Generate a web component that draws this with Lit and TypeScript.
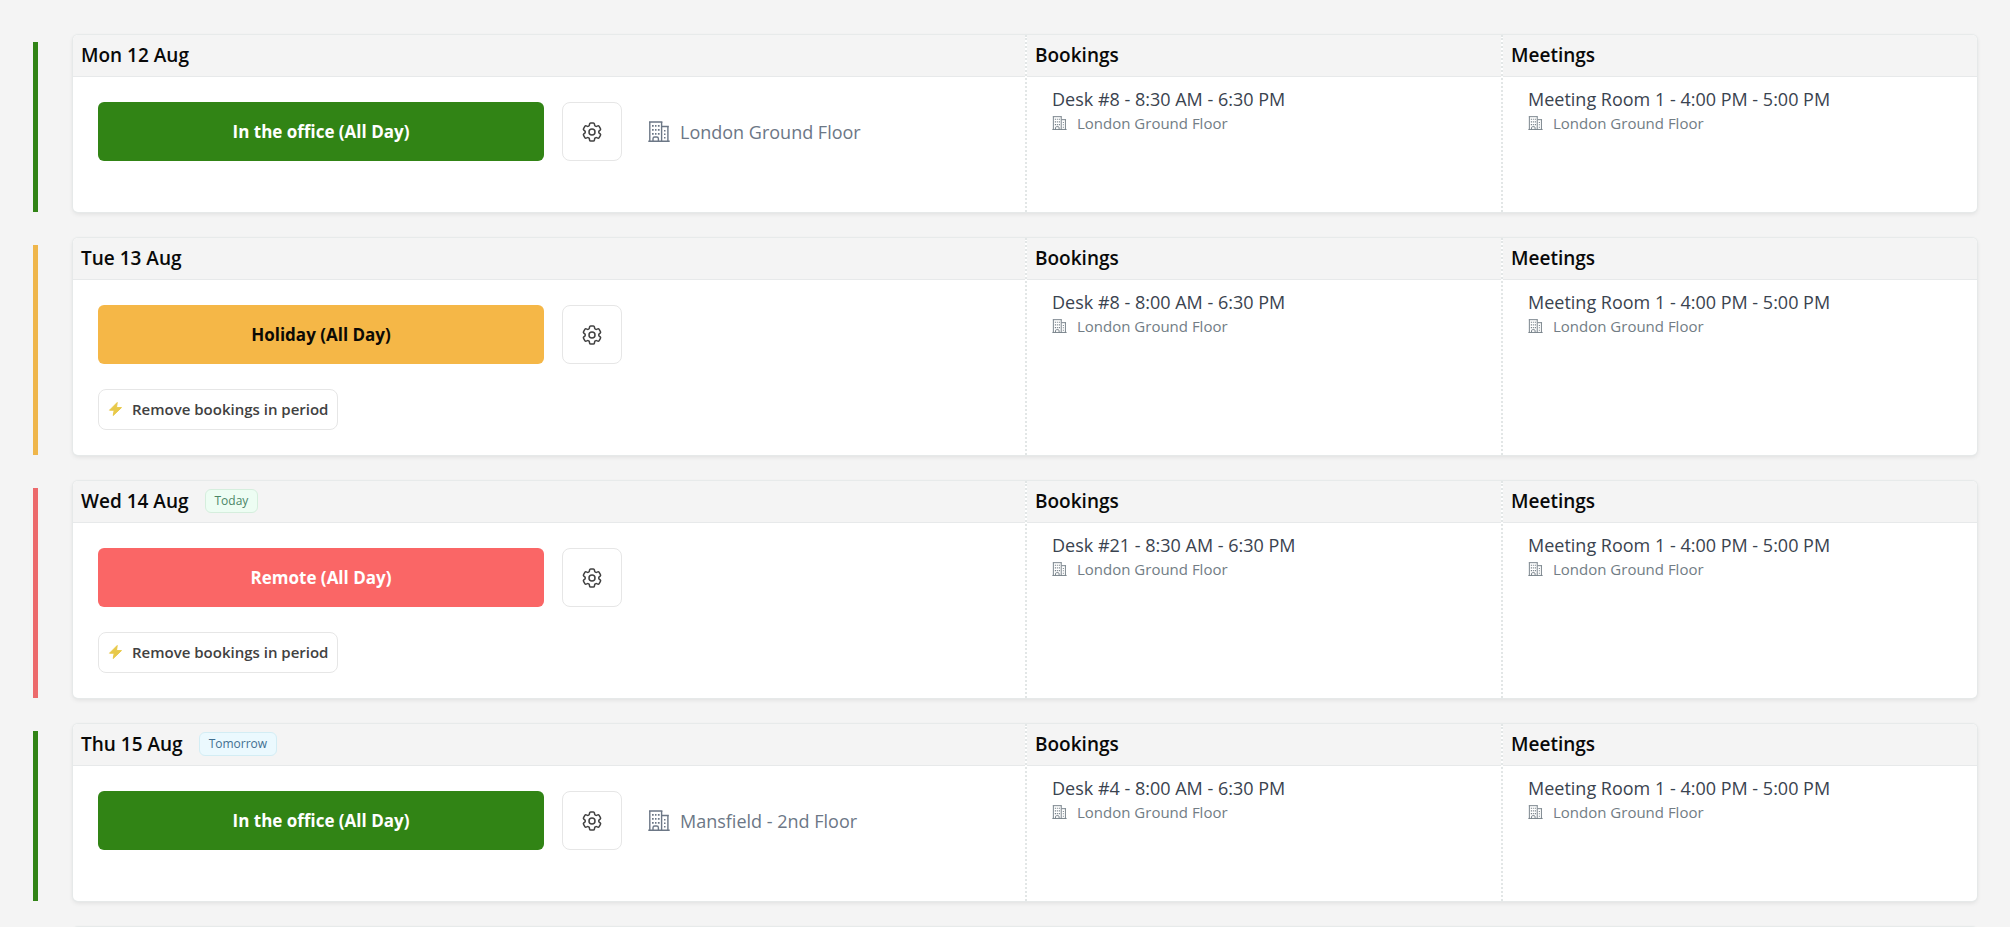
import { LitElement, html, css, svg, nothing } from "lit";
import { customElement, property } from "lit/decorators.js";

type Status = "office" | "holiday" | "remote";

interface Entry {
  title: string;
  place: string;
}

interface Day {
  date: string;
  status: Status;
  place?: string;
  badge?: "Today" | "Tomorrow";
  removable?: boolean;
  bookings: Entry[];
  meetings: Entry[];
}

const LABELS: Record<Status, string> = {
  office: "In the office (All Day)",
  holiday: "Holiday (All Day)",
  remote: "Remote (All Day)",
};

const LONDON = "London Ground Floor";
const meeting: Entry = { title: "Meeting Room 1 - 4:00 PM - 5:00 PM", place: LONDON };

const DAYS: Day[] = [
  {
    date: "Mon 12 Aug", status: "office", place: LONDON,
    bookings: [{ title: "Desk #8 - 8:30 AM - 6:30 PM", place: LONDON }], meetings: [meeting],
  },
  {
    date: "Tue 13 Aug", status: "holiday", removable: true,
    bookings: [{ title: "Desk #8 - 8:00 AM - 6:30 PM", place: LONDON }], meetings: [meeting],
  },
  {
    date: "Wed 14 Aug", status: "remote", removable: true, badge: "Today",
    bookings: [{ title: "Desk #21 - 8:30 AM - 6:30 PM", place: LONDON }], meetings: [meeting],
  },
  {
    date: "Thu 15 Aug", status: "office", place: "Mansfield - 2nd Floor", badge: "Tomorrow",
    bookings: [{ title: "Desk #4 - 8:00 AM - 6:30 PM", place: LONDON }], meetings: [meeting],
  },
];

const gearShape = svg`
  <path d="M9.594 3.94c.09-.542.56-.94 1.11-.94h2.593c.55 0 1.02.398 1.11.94l.213 1.281c.063.374.313.686.645.87.074.04.147.083.22.127.325.196.72.257 1.075.124l1.217-.456a1.125 1.125 0 0 1 1.37.49l1.296 2.247a1.125 1.125 0 0 1-.26 1.431l-1.003.827c-.293.241-.438.613-.43.992a7.723 7.723 0 0 1 0 .255c-.008.378.137.75.43.991l1.004.827c.424.35.534.955.26 1.43l-1.298 2.247a1.125 1.125 0 0 1-1.369.491l-1.217-.456c-.355-.133-.75-.072-1.076.124a6.47 6.47 0 0 1-.22.128c-.331.183-.581.495-.644.869l-.213 1.281c-.09.543-.56.94-1.11.94h-2.594c-.55 0-1.019-.398-1.11-.94l-.213-1.281c-.062-.374-.312-.686-.644-.87a6.52 6.52 0 0 1-.22-.127c-.325-.196-.72-.257-1.076-.124l-1.217.456a1.125 1.125 0 0 1-1.369-.49l-1.297-2.247a1.125 1.125 0 0 1 .26-1.431l1.004-.827c.292-.24.437-.613.43-.991a6.932 6.932 0 0 1 0-.255c.007-.38-.138-.751-.43-.992l-1.004-.827a1.125 1.125 0 0 1-.26-1.43l1.297-2.247a1.125 1.125 0 0 1 1.37-.491l1.216.456c.356.133.751.072 1.076-.124.072-.044.146-.086.22-.128.332-.183.582-.495.644-.869l.214-1.28Z"/>
  <circle cx="12" cy="12" r="3"/>`;

const buildingShape = svg`
  <g fill="none" stroke="currentColor" stroke-width="1.4">
    <path d="M.3 20.2H21.7M1 1h13.4M14 5.500h6.8"/>
    <path d="M1.800 1v19.3M13.600 1v19.3M19.900 5.500v14.8"/>
    <path d="M5 20v-2.300q0-1.700 1.700-1.700h2q1.700 0 1.700 1.700V20"/>
  </g>
  <g fill="currentColor">
    <path d="M4 4h1.700v1.700H4zM7 4h1.500v1.700H7zM9.900 4h1.700v1.700H9.900zM4 8h1.700v1.700H4zM7 8h1.500v1.700H7zM9.900 8h1.700v1.700H9.900zM4 12h1.700v1.700H4zM7 12h1.500v1.700H7zM9.900 12h1.700v1.700H9.900z"/>
    <path d="M16 9h1.500v1.500H16zM16 12.500h1.500V14H16zM16 16h1.500v1.500H16z"/>
  </g>`;

const building = (cls: string) =>
  html`<svg class=${cls} viewBox="0 0 22 21" aria-hidden="true">${buildingShape}</svg>`;

@customElement("day-card")
export class DayCard extends LitElement {
  @property({ attribute: false }) day?: Day;

  static styles = css`
    :host {
      display: grid;
      grid-template-columns: 5px 1fr;
      column-gap: 35px;
    }
    .marker { margin-top: 7px; }
    .marker.office { background: #318416; }
    .marker.holiday { background: #efb64b; }
    .marker.remote { background: #ec6a6c; }
    .card {
      display: grid;
      grid-template-columns: 2fr 1fr 1fr;
      grid-column: 2;
      min-height: 177px;
      background: #fff;
      border-radius: 5px;
      box-shadow: 0 0 1px 1px #e6e9e9, 0 2px 5px rgba(0, 0, 0, 0.09);
      overflow: hidden;
    }
    .column + .column { border-left: 2px dotted #e2e6e6; }
    .head {
      display: flex;
      align-items: center;
      gap: 16px;
      height: 39px;
      padding: 0 8px 2px;
      background: #f4f4f4;
      border-bottom: 1px solid #e7e9ea;
    }
    h2 {
      margin: 0;
      font-size: 19px;
      line-height: 24px;
      font-weight: 600;
      color: #090909;
    }
    .badge {
      padding: 0 9px;
      border: 1px solid;
      border-radius: 6px;
      font-size: 12px;
      line-height: 22px;
    }
    .badge.Today { color: #4b8667; background: #edfdf3; border-color: #d5eedd; }
    .badge.Tomorrow { color: #426f90; background: #ebf9fe; border-color: #d3edf4; }
    .body {
      display: flex;
      flex-direction: column;
      align-items: flex-start;
      gap: 25px;
      padding: 25px 35px 25px 25px;
    }
    .row {
      display: flex;
      align-items: center;
      gap: 18px;
      width: 100%;
    }
    button {
      font: inherit;
      cursor: pointer;
      box-sizing: border-box;
    }
    .status {
      flex: 0 0 50%;
      height: 59px;
      padding: 0 8px 1px;
      border: 0;
      border-radius: 6px;
      color: #fff;
      font-size: 17px;
      font-weight: 700;
    }
    .status.office { background: #318415; }
    .status.holiday { background: #f5b747; color: #0c0a05; }
    .status.remote { background: #fa6666; }
    .plain {
      display: flex;
      align-items: center;
      justify-content: center;
      background: #fff;
      border: 1px solid #e6e6e6;
      border-radius: 8px;
      color: #414141;
    }
    .settings { width: 60px; height: 59px; padding: 0; }
    .gear {
      width: 24px;
      height: 24px;
      fill: none;
      stroke: currentColor;
      stroke-width: 1.5;
      stroke-linejoin: round;
    }
    .remove {
      gap: 9px;
      height: 41px;
      padding: 0 9px 2px;
      font-size: 15px;
      font-weight: 600;
    }
    .bolt { width: 15px; height: 16px; fill: #e8c94a; stroke: #e8c94a; stroke-linejoin: round; }
    .place {
      display: flex;
      align-items: center;
      gap: 10px;
      margin-left: 8px;
      font-size: 18px;
      line-height: 24px;
      color: #6c7786;
    }
    .big { width: 22px; height: 21px; }
    .small { width: 15px; height: 14px; }
    ul { list-style: none; margin: 0; padding: 9px 25px; }
    .title { font-size: 18px; line-height: 26px; color: #3a434f; }
    .where {
      display: flex;
      align-items: center;
      gap: 10px;
      font-size: 15px;
      line-height: 22px;
      color: #727d85;
    }
  `;

  private list(entries: Entry[]) {
    return html`<ul>
      ${entries.map(
        (e) => html`<li>
          <div class="title">${e.title}</div>
          <div class="where">${building("small")}<span>${e.place}</span></div>
        </li>`
      )}
    </ul>`;
  }

  render() {
    const d = this.day;
    if (!d) {
      return html`<div class="card" aria-hidden="true">
        <div class="column"><div class="head"></div></div>
        <div class="column"><div class="head"></div></div>
        <div class="column"><div class="head"></div></div>
      </div>`;
    }
    return html`
      <div class="marker ${d.status}"></div>
      <article class="card">
        <section class="column">
          <div class="head">
            <h2>${d.date}</h2>
            ${d.badge ? html`<span class="badge ${d.badge}">${d.badge}</span>` : nothing}
          </div>
          <div class="body">
            <div class="row">
              <button class="status ${d.status}">${LABELS[d.status]}</button>
              <button class="plain settings" aria-label="Settings for ${d.date}">
                <svg class="gear" viewBox="0 0 24 24" aria-hidden="true">${gearShape}</svg>
              </button>
              ${d.place
                ? html`<div class="place">${building("big")}<span>${d.place}</span></div>`
                : nothing}
            </div>
            ${d.removable
              ? html`<button class="plain remove">
                  <svg class="bolt" viewBox="0 0 15 16" aria-hidden="true">
                    <path d="M9.2 1.500 1.500 9.200H6.200L5.200 14.500 13.500 6.600H8.500Z" />
                  </svg>
                  Remove bookings in period
                </button>`
              : nothing}
          </div>
        </section>
        <section class="column">
          <div class="head"><h2>Bookings</h2></div>
          ${this.list(d.bookings)}
        </section>
        <section class="column">
          <div class="head"><h2>Meetings</h2></div>
          ${this.list(d.meetings)}
        </section>
      </article>
    `;
  }
}

@customElement("app-root")
export class AppRoot extends LitElement {
  static styles = css`
    :host {
      display: block;
      box-sizing: border-box;
      height: 100vh;
      overflow-y: auto;
      scrollbar-width: none;
      background: #f4f4f4;
      font-family: "Open Sans", "Noto Sans", sans-serif;
    }
    main {
      display: flex;
      flex-direction: column;
      gap: 26px;
      padding: 35px 33px 26px;
    }
  `;

  render() {
    return html`<main>
      ${DAYS.map((d) => html`<day-card .day=${d}></day-card>`)}
      <day-card></day-card>
    </main>`;
  }
}
